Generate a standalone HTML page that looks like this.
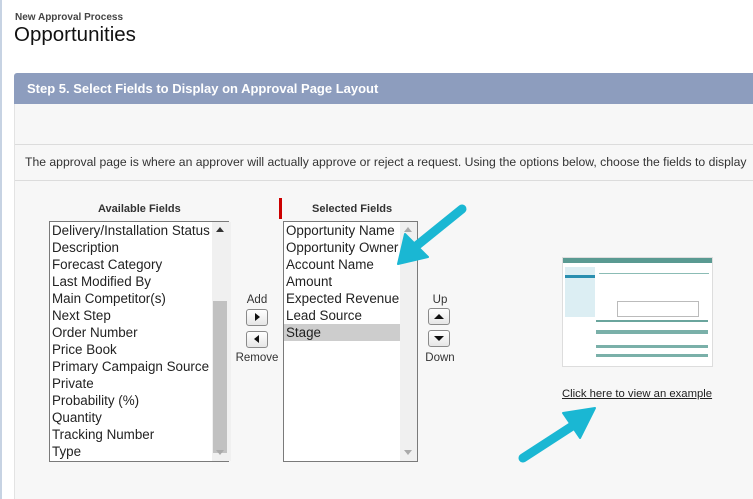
<!DOCTYPE html>
<html><head><style>
body{margin:0;width:753px;height:499px;background:#fff;position:relative;overflow:hidden;font-family:"Liberation Sans",Arial,sans-serif;}
.abs{position:absolute}
.lb{position:absolute;background:#fff;border:1px solid #7a7a7a;font-size:13.4px;color:#222;line-height:17px;box-sizing:border-box;padding-top:0}
.lb div{padding-left:2px;white-space:nowrap}
.btn{position:absolute;width:22px;height:17px;border:1px solid #8a8a8a;border-radius:3px;background:linear-gradient(#fff,#e6e6e6);box-sizing:border-box}
.lbl{position:absolute;font-size:11.5px;color:#333;text-align:center}
</style></head><body>
<div class="abs" style="left:0;top:0;width:2px;height:499px;background:#c7d3e3"></div>
<div class="abs" style="left:15px;top:12px;font-size:10px;font-weight:bold;color:#444">New Approval Process</div>
<div class="abs" style="left:14px;top:23px;font-size:20.5px;color:#111">Opportunities</div>
<div class="abs" style="left:14px;top:73px;width:739px;height:31px;background:#8d9dbe;border-radius:3px 0 0 0"></div>
<div class="abs" style="left:27px;top:81px;font-size:13px;font-weight:bold;color:#fff">Step 5. Select Fields to Display on Approval Page Layout</div>
<div class="abs" style="left:14px;top:104px;width:739px;height:395px;background:#f7f7f7;border-left:1px solid #e3e3e3"></div>
<div class="abs" style="left:15px;top:144px;width:738px;height:1px;background:#dcdcdc"></div>
<div class="abs" style="left:15px;top:180px;width:738px;height:1px;background:#dcdcdc"></div>
<div class="abs" style="left:25px;top:155px;font-size:12.2px;color:#333;white-space:nowrap">The approval page is where an approver will actually approve or reject a request. Using the options below, choose the fields to display</div>
<div class="abs" style="left:98px;top:203px;font-size:11px;font-weight:bold;color:#333">Available Fields</div>
<div class="abs" style="left:312px;top:203px;font-size:11px;font-weight:bold;color:#333">Selected Fields</div>
<div class="abs" style="left:279px;top:198px;width:3px;height:21px;background:#c00"></div>
<div class="lb" style="left:49px;top:221px;width:180px;height:241px">
<div>Delivery/Installation Status</div><div>Description</div><div>Forecast Category</div><div>Last Modified By</div><div>Main Competitor(s)</div><div>Next Step</div><div>Order Number</div><div>Price Book</div><div>Primary Campaign Source</div><div>Private</div><div>Probability (%)</div><div>Quantity</div><div>Tracking Number</div><div>Type</div>
<div class="abs" style="left:162px;top:0;width:17px;height:239px;background:#f0f0f0"></div>
<div class="abs" style="left:163px;top:79px;width:14px;height:152px;background:#c1c1c1;padding:0"></div>
<div class="abs" style="left:166px;top:5px;width:0;height:0;border-left:4px solid transparent;border-right:4px solid transparent;border-bottom:5px solid #333;padding:0"></div>
<div class="abs" style="left:166px;top:228px;width:0;height:0;border-left:4px solid transparent;border-right:4px solid transparent;border-top:5px solid #aaa;padding:0"></div>
</div>
<div class="lb" style="left:283px;top:221px;width:135px;height:241px">
<div>Opportunity Name</div><div>Opportunity Owner</div><div>Account Name</div><div>Amount</div><div>Expected Revenue</div><div>Lead Source</div><div style="background:#cdcdcd;width:114px">Stage</div>
<div class="abs" style="left:116px;top:0;width:17px;height:239px;background:#f0f0f0;padding:0"></div>
<div class="abs" style="left:120px;top:5px;width:0;height:0;border-left:4px solid transparent;border-right:4px solid transparent;border-bottom:5px solid #aaa;padding:0"></div>
<div class="abs" style="left:120px;top:228px;width:0;height:0;border-left:4px solid transparent;border-right:4px solid transparent;border-top:5px solid #aaa;padding:0"></div>
</div>
<div class="lbl" style="left:236px;top:294px;width:42px">Add</div>
<div class="btn" style="left:246px;top:309px"><div class="abs" style="left:8px;top:3px;border-top:4.5px solid transparent;border-bottom:4.5px solid transparent;border-left:5px solid #111"></div></div>
<div class="btn" style="left:246px;top:331px"><div class="abs" style="left:7px;top:3px;border-top:4.5px solid transparent;border-bottom:4.5px solid transparent;border-right:5px solid #111"></div></div>
<div class="lbl" style="left:232px;top:352px;width:50px">Remove</div>
<div class="lbl" style="left:424px;top:294px;width:32px">Up</div>
<div class="btn" style="left:428px;top:308px"><div class="abs" style="left:5px;top:5px;border-left:5px solid transparent;border-right:5px solid transparent;border-bottom:5px solid #111"></div></div>
<div class="btn" style="left:428px;top:330px"><div class="abs" style="left:5px;top:5px;border-left:5px solid transparent;border-right:5px solid transparent;border-top:5px solid #111"></div></div>
<div class="lbl" style="left:420px;top:352px;width:40px">Down</div>
<div class="abs" style="left:562px;top:257px;width:151px;height:110px;background:#fff;border:1px solid #ddd;box-sizing:border-box">
<div class="abs" style="left:0;top:0;width:149px;height:5px;background:#5a9a92"></div>
<div class="abs" style="left:2px;top:9px;width:30px;height:50px;background:#dceef3"></div>
<div class="abs" style="left:2px;top:17px;width:30px;height:3px;background:#2a8fb0"></div>
<div class="abs" style="left:36px;top:15px;width:110px;height:1px;background:#8bbcb5"></div>
<div class="abs" style="left:54px;top:43px;width:80px;height:14px;border:1px solid #bbb"></div>
<div class="abs" style="left:33px;top:62px;width:112px;height:2px;background:#6aa59d"></div>
<div class="abs" style="left:33px;top:72px;width:112px;height:4px;background:#7ab0a9"></div>
<div class="abs" style="left:33px;top:87px;width:112px;height:3px;background:#7ab0a9"></div>
<div class="abs" style="left:33px;top:96px;width:112px;height:3px;background:#7ab0a9"></div>
</div>
<div class="abs" style="left:562px;top:388px;font-size:11.3px;color:#222;text-decoration:underline">Click here to view an example</div>
<svg class="abs" style="left:0;top:0" width="753" height="499">
<g fill="#1ab7d3" stroke="#1ab7d3" stroke-linecap="round" stroke-linejoin="round">
<line x1="462" y1="209" x2="415" y2="247" stroke-width="9"/>
<polygon points="398,264 405,234 428,257" stroke-width="2"/>
<line x1="523" y1="458" x2="577" y2="423" stroke-width="9"/>
<polygon points="595,408 563,413 580,438" stroke-width="2"/>
</g></svg>
</body></html>
